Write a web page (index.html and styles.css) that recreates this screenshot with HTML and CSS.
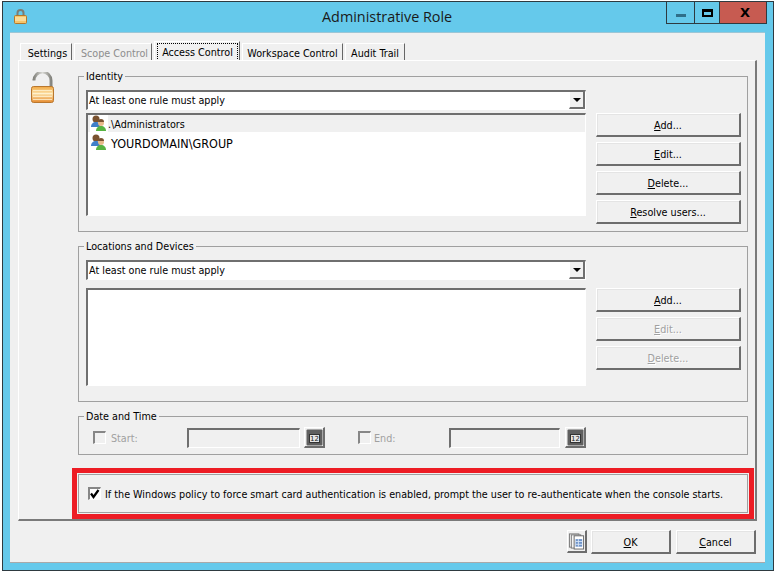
FILE: index.html
```html
<!DOCTYPE html>
<html lang="en">
<head>
<meta charset="utf-8">
<title>Administrative Role</title>
<link rel="stylesheet" href="styles.css">
</head>
<body>
<div class="window">
  <header class="titlebar">
    <svg class="title-icon" width="13" height="15" viewBox="0 0 13 15"><path d="M3.500 6.500V4a3 3 0 0 1 6 0v2.500" fill="none" stroke="#7d7d74" stroke-width="2"/><rect x=".5" y="6.500" width="12" height="8" rx="1" fill="#f6c56a" stroke="#b5772a"/><path d="M1 9h11M1 11h11" stroke="#fff2c8"/></svg>
    <h1 class="title">Administrative Role</h1>
    <div class="controls">
      <div class="ctl ctl-min"><span class="min-glyph"></span></div>
      <div class="ctl ctl-max"><span class="max-glyph"></span></div>
      <div class="ctl ctl-close">X</div>
    </div>
  </header>
  <main class="client">
    <nav class="tabs">
      <div class="tab tab-settings">Settings</div>
      <div class="tab tab-scope off">Scope Control</div>
      <div class="tab tab-access active"><span class="focus">Access Control</span></div>
      <div class="tab tab-work">Workspace Control</div>
      <div class="tab tab-audit">Audit Trail</div>
    </nav>
    <section class="panel">
      <div class="panel-icon">
        <svg width="24" height="31" viewBox="0 0 24 31"><defs><linearGradient id="sh" x1="0" x2="1" y1="0" y2="0"><stop offset="0" stop-color="#85857f"/><stop offset=".5" stop-color="#d9d9d5"/><stop offset="1" stop-color="#85857f"/></linearGradient><linearGradient id="body" x1="0" x2="0" y1="0" y2="1"><stop offset="0" stop-color="#f0a640"/><stop offset=".45" stop-color="#fde4ad"/><stop offset="1" stop-color="#e58a2e"/></linearGradient></defs><path d="M3 7V8.500A8.500 8.500 0 0 1 20 8.500V15" fill="none" stroke="url(#sh)" stroke-width="3"/><rect x=".5" y="14.500" width="22" height="16" rx="2" fill="url(#body)" stroke="#b9772e"/><path d="M2 18.500h19M2 21.500h19M2 24.500h19M2 27.500h19" stroke="#fff6d8" stroke-opacity=".75"/></svg>
      </div>
      <div class="panel-body">
        <fieldset class="group group-large">
          <legend>Identity</legend>
          <div class="select"><span class="select-text">At least one rule must apply</span><span class="arrow"></span></div>
          <div class="list-row">
            <ul class="list">
              <li class="item selected">
                <svg class="users" width="18" height="17" viewBox="0 0 18 17"><rect width="18" height="17" fill="#fff"/><circle cx="6" cy="4" r="3.500" fill="#7a5230"/><path d="M1 12c0-3 2-5 5-5s4 2 4 5z" fill="#3f7fc8"/><circle cx="11" cy="8" r="3" fill="#e8b98a"/><path d="M8 7a3 3 0 0 1 6 0z" fill="#7a5230"/><path d="M6 16c0-3 2-5 5-5s5 2 5 5z" fill="#57b342"/></svg>
                <span>.\Administrators</span>
              </li>
              <li class="item">
                <svg class="users" width="18" height="17" viewBox="0 0 18 17"><circle cx="6" cy="4" r="3.500" fill="#7a5230"/><path d="M1 12c0-3 2-5 5-5s4 2 4 5z" fill="#3f7fc8"/><circle cx="11" cy="8" r="3" fill="#e8b98a"/><path d="M8 7a3 3 0 0 1 6 0z" fill="#7a5230"/><path d="M6 16c0-3 2-5 5-5s5 2 5 5z" fill="#57b342"/></svg>
                <span class="gap">YOURDOMAIN\GROUP</span>
              </li>
            </ul>
            <div class="buttons">
              <button class="btn"><u>A</u>dd...</button>
              <button class="btn"><u>E</u>dit...</button>
              <button class="btn"><u>D</u>elete...</button>
              <button class="btn"><u>R</u>esolve users...</button>
            </div>
          </div>
        </fieldset>
        <fieldset class="group group-large">
          <legend>Locations and Devices</legend>
          <div class="select"><span class="select-text">At least one rule must apply</span><span class="arrow"></span></div>
          <div class="list-row list-row-b">
            <ul class="list list-b"></ul>
            <div class="buttons">
              <button class="btn"><u>A</u>dd...</button>
              <button class="btn off"><u>E</u>dit...</button>
              <button class="btn off"><u>D</u>elete...</button>
            </div>
          </div>
        </fieldset>
        <fieldset class="group group-date">
          <legend>Date and Time</legend>
          <div class="date-row">
            <span class="check check-off"></span><span class="date-label off">Start:</span>
            <span class="date-input"></span>
            <span class="cal"><svg width="17" height="17" viewBox="0 0 17 17"><rect x=".5" y=".5" width="16" height="16" rx="1" fill="#5f5f5f"/><rect x="3.500" y="5.500" width="10" height="8" fill="#e6e6e6" stroke="#333"/><text x="8.500" y="12" class="cal-text" text-anchor="middle">12</text></svg></span>
            <span class="check check-off check-end"></span><span class="date-label off date-label-end">End:</span>
            <span class="date-input date-input-end"></span>
            <span class="cal cal-end"><svg width="17" height="17" viewBox="0 0 17 17"><rect x=".5" y=".5" width="16" height="16" rx="1" fill="#5f5f5f"/><rect x="3.500" y="5.500" width="10" height="8" fill="#e6e6e6" stroke="#333"/><text x="8.500" y="12" class="cal-text" text-anchor="middle">12</text></svg></span>
          </div>
        </fieldset>
        <div class="highlight">
          <div class="policy">
            <span class="check"><svg width="10" height="10" viewBox="0 0 10 10"><path d="M1 4.500l2.500 3.500 5-7" fill="none" stroke="#000" stroke-width="2.200"/></svg></span>
            <span class="policy-text">If the Windows policy to force smart card authentication is enabled, prompt the user to re-authenticate when the console starts.</span>
          </div>
        </div>
      </div>
    </section>
    <footer class="footer">
      <button class="icon-btn"><svg width="18" height="18" viewBox="0 0 18 18"><rect x="1.500" y="1.500" width="10" height="14" fill="#f4f4f4" stroke="#777"/><rect x="3.500" y="2.500" width="10" height="14" fill="#f4f4f4" stroke="#777"/><rect x="6.500" y="3.500" width="10" height="14" fill="#fff" stroke="#666"/><rect x="8" y="7" width="7" height="8" fill="#6d93c9"/><path d="M8 9.500h7M8 12.500h7M11 7v8" stroke="#d4e2f4"/></svg></button>
      <button class="btn btn-foot"><u>O</u>K</button>
      <button class="btn btn-foot"><u>C</u>ancel</button>
    </footer>
  </main>
</div>
</body>
</html>
```
FILE: styles.css
```css
* { box-sizing: border-box; }
html, body { margin: 0; padding: 0; background: #fff; }
body { font-family: "DejaVu Sans", sans-serif; font-stretch: condensed; font-size: 10.700px; color: #000; }
.window { width: 772px; height: 570px; margin: 1px 0 0 2px; border: 1px solid #2e3a40; background: #65c9eb; padding: 0 8px 7px 7px; display: flex; flex-direction: column; }
.titlebar { height: 30px; display: flex; align-items: flex-start; position: relative; flex: none; }
.title-icon { margin: 7px 0 0 4px; flex: none; }
.title { margin: 5px 0 0 295px; font: 400 14.400px/20px "Open Sans", sans-serif; color: #1a1a1a; white-space: nowrap; }
.controls { position: absolute; top: 0; right: -2px; display: flex; height: 22px; border: 1px solid #2e3a40; border-top: 0; }
.ctl { display: flex; align-items: center; justify-content: center; height: 100%; }
.ctl-min { width: 28px; border-right: 1px solid #2e3a40; }
.ctl-max { width: 25px; border-right: 1px solid #2e3a40; }
.ctl-close { width: 46px; padding-left: 4px; background: #c75b51; font: 700 13px "DejaVu Sans", sans-serif; }
.min-glyph { width: 10px; height: 3px; background: #2f6f8a; margin-top: 6px; }
.max-glyph { width: 11px; height: 8px; border: 2px solid #000; border-top-width: 3px; }
.client { flex: 1; background: #f0f0f0; border-top: 1px solid #9cc6d6; border-bottom: 1px solid #a9a9a9; padding: 8px 8px 0 8px; display: flex; flex-direction: column; }
.tabs { height: 19px; display: flex; align-items: flex-end; padding-left: 2px; flex: none; }
.tab { height: 17px; line-height: 15px; padding: 2px 0 0 3px; margin-right: 2px; text-align: center; border-top: 1px solid #fff; border-left: 1px solid #fff; border-right: 1px solid #666; white-space: nowrap; flex: none; }
.tab-settings { width: 52px; }
.tab-scope { width: 78px; }
.tab-access { width: 86px; height: 19px; padding: 1px 1px 1px 2px; line-height: 17px; }
.tab-work { width: 101px; padding-left: 0; }
.tab-audit { width: 60px; padding-left: 0; }
.focus { display: block; height: 16px; border: 1px dotted #000; border-bottom: 0; }
.off { color: #a0a0a0; }
.tab.off { color: #8d8d8d; }
.panel { width: 739px; height: 461px; border-top: 1px solid #fff; border-left: 1px solid #fff; border-right: 2px solid #7a7a7a; border-bottom: 2px solid #7a7a7a; display: flex; flex: none; }
.panel-icon { width: 59px; padding: 11px 0 0 12px; flex: none; }
.panel-body { width: 670px; padding-top: 8px; flex: none; }
.group { margin: 0 0 7px; padding: 7px 7px 0; border: 1px solid #a0a0a0; min-width: 0; display: block; }
.group legend { padding: 0 2px; margin-left: -2px; height: 14px; line-height: 16px; }
.group-large { height: 163px; }
.group-date { height: 46px; padding-top: 4px; margin-bottom: 0; }
.select { width: 500px; height: 20px; border: 2px solid #6f6f6f; border-right: 1px solid #fff; border-bottom: 1px solid #fff; background: #fff; display: flex; align-items: center; justify-content: space-between; }
.select-text { padding-left: 1px; }
.arrow { width: 16px; height: 17px; background: #f0f0f0; border-right: 2px solid #6f6f6f; border-bottom: 2px solid #6f6f6f; border-left: 1px solid #fff; position: relative; display: flex; align-items: center; justify-content: center; }
.arrow::after { content: ""; border: 4px solid transparent; border-top: 4px solid #000; border-bottom: 0; }
.list-row { display: flex; margin-top: 3px; gap: 10px; }
.list-row-b { margin-top: 8px; }
.list { list-style: none; margin: 0; padding: 0; width: 500px; height: 103px; border: 2px solid #6f6f6f; border-right: 1px solid #fff; border-bottom: 1px solid #fff; background: #fff; flex: none; }
.list-b { height: 98px; }
.item { height: 20px; display: flex; align-items: center; padding-left: 2px; }
.item span { padding-top: 2px; }
.item.selected { height: 17px; background: #f0f0f0; }
.item .gap { padding-left: 3px; font-size: 12.500px; }
.users { flex: none; }
.buttons { width: 145px; display: flex; flex-direction: column; gap: 5px; flex: none; }
.btn { height: 24px; padding: 2px 0 0; background: #f0f0f0; font: inherit; color: #000; border: 2px solid #6d6d6d; border-top: 1px solid #fff; border-left: 1px solid #fff; box-shadow: inset 1px 1px 0 #e4e4e4; text-align: center; }
.btn.off { color: #a0a0a0; text-shadow: 1px 1px 0 #fff; }
.date-row { display: flex; align-items: center; height: 21px; padding-left: 7px; }
.check { width: 13px; height: 13px; border: 2px solid #868686; border-right: 1px solid #fff; border-bottom: 1px solid #fff; background: #fff; display: flex; align-items: center; justify-content: center; flex: none; }
.check-off { background: #f0f0f0; }
.check-end { margin-left: 33px; }
.date-label { width: 81px; padding: 2px 0 0 5px; flex: none; }
.date-label-end { width: 78px; padding-left: 3px; }
.date-input { width: 113px; height: 20px; border: 2px solid #6f6f6f; border-right: 1px solid #fff; border-bottom: 1px solid #fff; flex: none; }
.date-input-end { width: 111px; }
.cal { width: 21px; height: 21px; margin-left: 4px; background: #f0f0f0; border: 2px solid #6d6d6d; border-top: 1px solid #fff; border-left: 1px solid #fff; display: flex; align-items: center; justify-content: center; flex: none; }
.cal-end { margin-left: 5px; }
.cal-text { font: 400 7px "DejaVu Sans", sans-serif; fill: #222; }
.highlight { width: 682px; height: 51px; margin: 13px 0 0 -6px; border: 5px solid #ed1c24; padding: 1px; }
.policy { height: 39px; border: 1px solid #a0a0a0; display: flex; align-items: center; padding-left: 9px; gap: 4px; white-space: nowrap; }
.policy-text { padding-top: 2px; }
.footer { display: flex; justify-content: flex-end; align-items: flex-start; gap: 5px; width: 738px; padding-top: 9px; flex: none; }
.icon-btn { width: 20px; height: 23px; padding: 0; margin-right: -1px; background: #f0f0f0; border: 2px solid #6d6d6d; border-top: 1px solid #fff; border-left: 1px solid #fff; display: flex; align-items: center; justify-content: center; }
.btn-foot { width: 80px; }
u { text-underline-offset: 1px; }
```
